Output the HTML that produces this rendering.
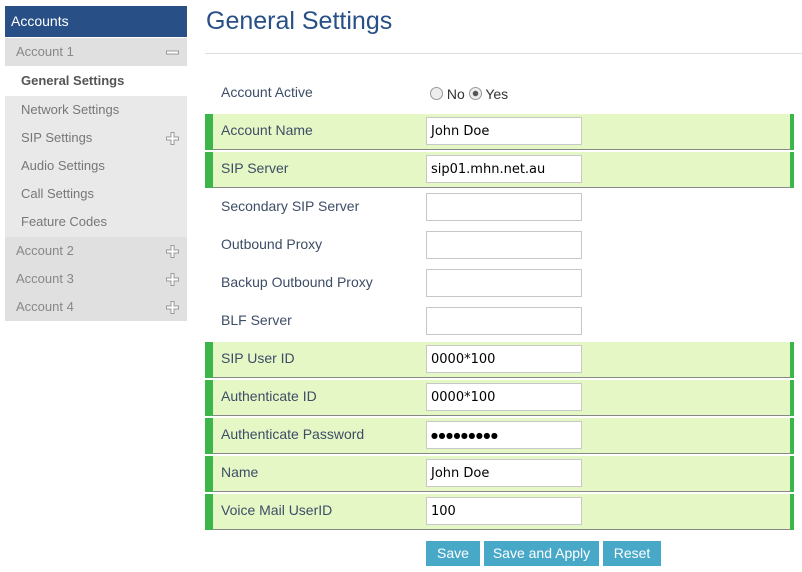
<!DOCTYPE html>
<html><head><style>
body{margin:0;width:802px;height:572px;background:#fff;font-family:"Liberation Sans",Arial,sans-serif;position:relative;overflow:hidden}
.a{position:absolute}
.side div{position:absolute;left:5px;width:182px;font-size:13px;line-height:28px}
.hdr{background:#285086;color:#fff;top:6px;height:31px!important;line-height:31px!important;font-size:14px!important}
.acc{background:#e0e0e0;color:#888;padding-left:11px;width:171px!important}
.sub{background:#e9e9e9;color:#777;padding-left:16px;width:166px!important}
.pl{position:absolute;right:8px;top:8px;width:13px;height:13px}
.row{position:absolute;left:205px;width:589px;height:35px}
.g{background:#e6f7c6;border-bottom:1px solid #888}
.g:before{content:"";position:absolute;left:0;top:0;width:8px;height:36px;background:#3cb64a}
.g:after{content:"";position:absolute;right:0;top:0;width:4px;height:36px;background:#3cb64a}
.lbl{position:absolute;left:16px;top:0;line-height:33px;font-size:14px;color:#3d4d66}
.in{position:absolute;left:221px;top:3px;border:1px solid #c8c8c8;background:#fff;font-family:"DejaVu Sans",sans-serif;font-size:13px;line-height:28px;padding-left:4px;box-sizing:border-box;width:156px;height:28px;color:#000}
.btn{position:absolute;top:541px;height:25px;background:#48a8c8;color:#fff;font-size:14px;line-height:25px;text-align:center}
</style></head><body>
<svg width="0" height="0" style="position:absolute"><defs><symbol id="p" viewBox="0 0 13 13"><path d="M5 0.5H8V5H12.5V8H8V12.5H5V8H0.5V5H5Z" fill="#fff" stroke="#999" stroke-width="1"/></symbol></defs></svg>
<div class="side">
<div class="hdr" style="padding-left:6px;width:176px">Accounts</div>
<div class="acc" style="top:38px">Account 1<svg class="pl" viewBox="0 0 13 13"><rect x="0.5" y="5" width="12" height="3" fill="#fff" stroke="#999"/></svg></div>
<div style="top:67px;height:29px;padding-left:16px;width:166px;color:#555;font-weight:bold;background:#fff">General Settings</div>
<div class="sub" style="top:96px">Network Settings</div>
<div class="sub" style="top:124px">SIP Settings<svg class="pl"><use href="#p"/></svg></div>
<div class="sub" style="top:152px">Audio Settings</div>
<div class="sub" style="top:180px">Call Settings</div>
<div class="sub" style="top:208px;height:29px">Feature Codes</div>
<div class="acc" style="top:237px">Account 2<svg class="pl"><use href="#p"/></svg></div>
<div class="acc" style="top:265px">Account 3<svg class="pl"><use href="#p"/></svg></div>
<div class="acc" style="top:293px">Account 4<svg class="pl"><use href="#p"/></svg></div>
</div>
<div class="a" style="left:206px;top:7px;font-size:25px;color:#285086">General Settings</div>
<div class="a" style="left:205px;top:53px;width:597px;height:1px;background:#ddd"></div>
<div class="row" style="top:76px"><span class="lbl">Account Active</span>
<span class="a" style="left:225px;top:9px;font-size:14px;color:#333;line-height:18px"><span style="display:inline-block;width:11px;height:11px;border:1px solid #999;border-radius:50%;background:#eee;vertical-align:-1px"></span> No <span style="display:inline-block;width:11px;height:11px;border:1px solid #999;border-radius:50%;background:radial-gradient(#555 30%,#eee 40%);vertical-align:-1px"></span> Yes</span></div>
<div class="row g" style="top:114px"><span class="lbl">Account Name</span><div class="in">John Doe</div></div>
<div class="row g" style="top:152px"><span class="lbl">SIP Server</span><div class="in">sip01.mhn.net.au</div></div>
<div class="row" style="top:190px"><span class="lbl">Secondary SIP Server</span><div class="in"></div></div>
<div class="row" style="top:228px"><span class="lbl">Outbound Proxy</span><div class="in"></div></div>
<div class="row" style="top:266px"><span class="lbl">Backup Outbound Proxy</span><div class="in"></div></div>
<div class="row" style="top:304px"><span class="lbl">BLF Server</span><div class="in"></div></div>
<div class="row g" style="top:342px"><span class="lbl">SIP User ID</span><div class="in">0000*100</div></div>
<div class="row g" style="top:380px"><span class="lbl">Authenticate ID</span><div class="in">0000*100</div></div>
<div class="row g" style="top:418px"><span class="lbl">Authenticate Password</span><div class="in" style="font-size:8px;letter-spacing:0.5px">●●●●●●●●●</div></div>
<div class="row g" style="top:456px"><span class="lbl">Name</span><div class="in">John Doe</div></div>
<div class="row g" style="top:494px"><span class="lbl">Voice Mail UserID</span><div class="in">100</div></div>
<div class="btn" style="left:426px;width:54px">Save</div>
<div class="btn" style="left:484px;width:115px">Save and Apply</div>
<div class="btn" style="left:603px;width:58px">Reset</div>
</body></html>
